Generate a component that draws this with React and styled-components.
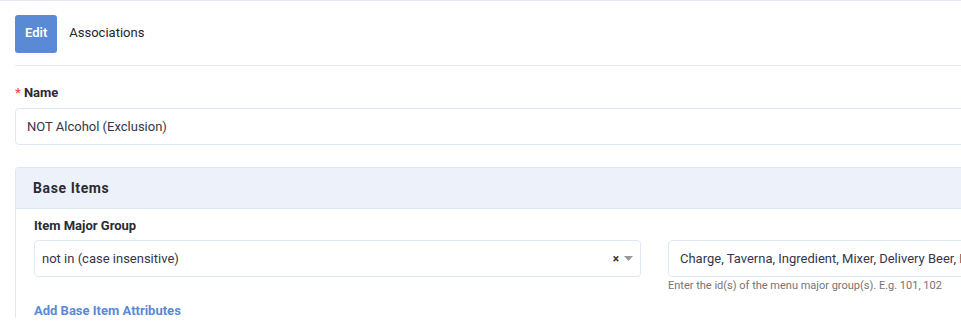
import React from 'react';
import styled, { createGlobalStyle } from 'styled-components';

const GlobalStyle = createGlobalStyle`
  body {
    margin: 0;
    font-family: Roboto, "Liberation Sans", Arial, sans-serif;
    color: #333;
    background: #fff;
    overflow: hidden;
  }
`;

const Page = styled.div`
  width: 1310px;
  border-top: 1px solid #e4e9f2;
  padding: 14px 0 0 15px;
  box-sizing: border-box;
`;

const TabBar = styled.div`
  display: flex;
  align-items: center;
  gap: 12px;
  padding-bottom: 12px;
  border-bottom: 1px solid #e4e9f2;
`;

const TabButton = styled.button`
  height: 38px;
  padding: 0 ${(p) => (p.$active ? '10px' : '0')};
  border: none;
  border-radius: 3px;
  background: ${(p) => (p.$active ? '#5a8ad6' : 'transparent')};
  color: ${(p) => (p.$active ? '#fff' : '#23232e')};
  font-family: inherit;
  font-size: 13px;
  line-height: 16px;
  padding-bottom: 2px;
  font-weight: ${(p) => (p.$active ? 600 : 400)};
  cursor: pointer;
`;

const Field = styled.div`
  display: flex;
  flex-direction: column;
`;

const Label = styled.label`
  font-size: 13px;
  font-weight: 700;
  color: #2b2b36;
  line-height: 16px;
  margin-bottom: 7px;
  span {
    color: #e2574c;
    margin-right: 3px;
  }
`;

const TextInput = styled.div`
  height: 37px;
  box-sizing: border-box;
  border: 1px solid #e2e8f2;
  border-radius: 4px;
  padding: 0 11px;
  display: flex;
  align-items: center;
  font-size: 13px;
  color: #36364a;
  white-space: nowrap;
  overflow: hidden;
  background: #fff;
`;

const NameSection = styled.div`
  margin-top: 19px;
`;

const Card = styled.section`
  margin-top: 22px;
  border: 1px solid #e2e8f2;
  border-bottom: none;
  border-radius: 4px 4px 0 0;
`;

const CardHeader = styled.header`
  height: 40px;
  background: #edf1fa;
  border-bottom: 1px solid #e2e8f2;
  display: flex;
  align-items: center;
  padding: 0 17px;
  font-size: 14px;
  font-weight: 700;
  letter-spacing: 0.6px;
  color: #2b2b36;
  border-radius: 4px 4px 0 0;
`;

const CardBody = styled.div`
  padding: 9px 18px 0;
`;

const ConditionGrid = styled.div`
  display: grid;
  grid-template-columns: 607px 1fr;
  column-gap: 27px;
  & > label {
    grid-column: 1 / -1;
    margin-bottom: 6px;
  }
`;

const Select = styled(TextInput)`
  padding: 0 7px;
  justify-content: space-between;
`;

const Controls = styled.div`
  display: flex;
  align-items: center;
  gap: 5px;
  color: #333;
  font-size: 12px;
  font-weight: 700;
  svg {
    display: block;
  }
`;

const Help = styled.div`
  grid-column: 2;
  margin-top: 2px;
  font-size: 11px;
  line-height: 14px;
  color: #757575;
  white-space: nowrap;
`;

const AddLink = styled.a`
  display: block;
  margin-top: 10px;
  font-size: 13px;
  font-weight: 700;
  color: #5a8ad6;
  text-decoration: none;
`;

export default function App() {
  return (
    <>
      <GlobalStyle />
      <Page>
        <TabBar>
          <TabButton $active>Edit</TabButton>
          <TabButton>Associations</TabButton>
        </TabBar>

        <NameSection>
          <Field>
            <Label>
              <span>*</span>Name
            </Label>
            <TextInput>NOT Alcohol (Exclusion)</TextInput>
          </Field>
        </NameSection>

        <Card>
          <CardHeader>Base Items</CardHeader>
          <CardBody>
            <ConditionGrid>
              <Label>Item Major Group</Label>
              <Select>
                not in (case insensitive)
                <Controls>
                  <span>×</span>
                  <svg width="9" height="5" viewBox="0 0 9 5">
                    <path d="M0 0h9L4.5 5z" fill="#999" />
                  </svg>
                </Controls>
              </Select>
              <TextInput>Charge, Taverna, Ingredient, Mixer, Delivery Beer, Delivery Wine, Delivery Liquor</TextInput>
              <Help>Enter the id(s) of the menu major group(s). E.g. 101, 102</Help>
            </ConditionGrid>
            <AddLink href="#">Add Base Item Attributes</AddLink>
          </CardBody>
        </Card>
      </Page>
    </>
  );
}
